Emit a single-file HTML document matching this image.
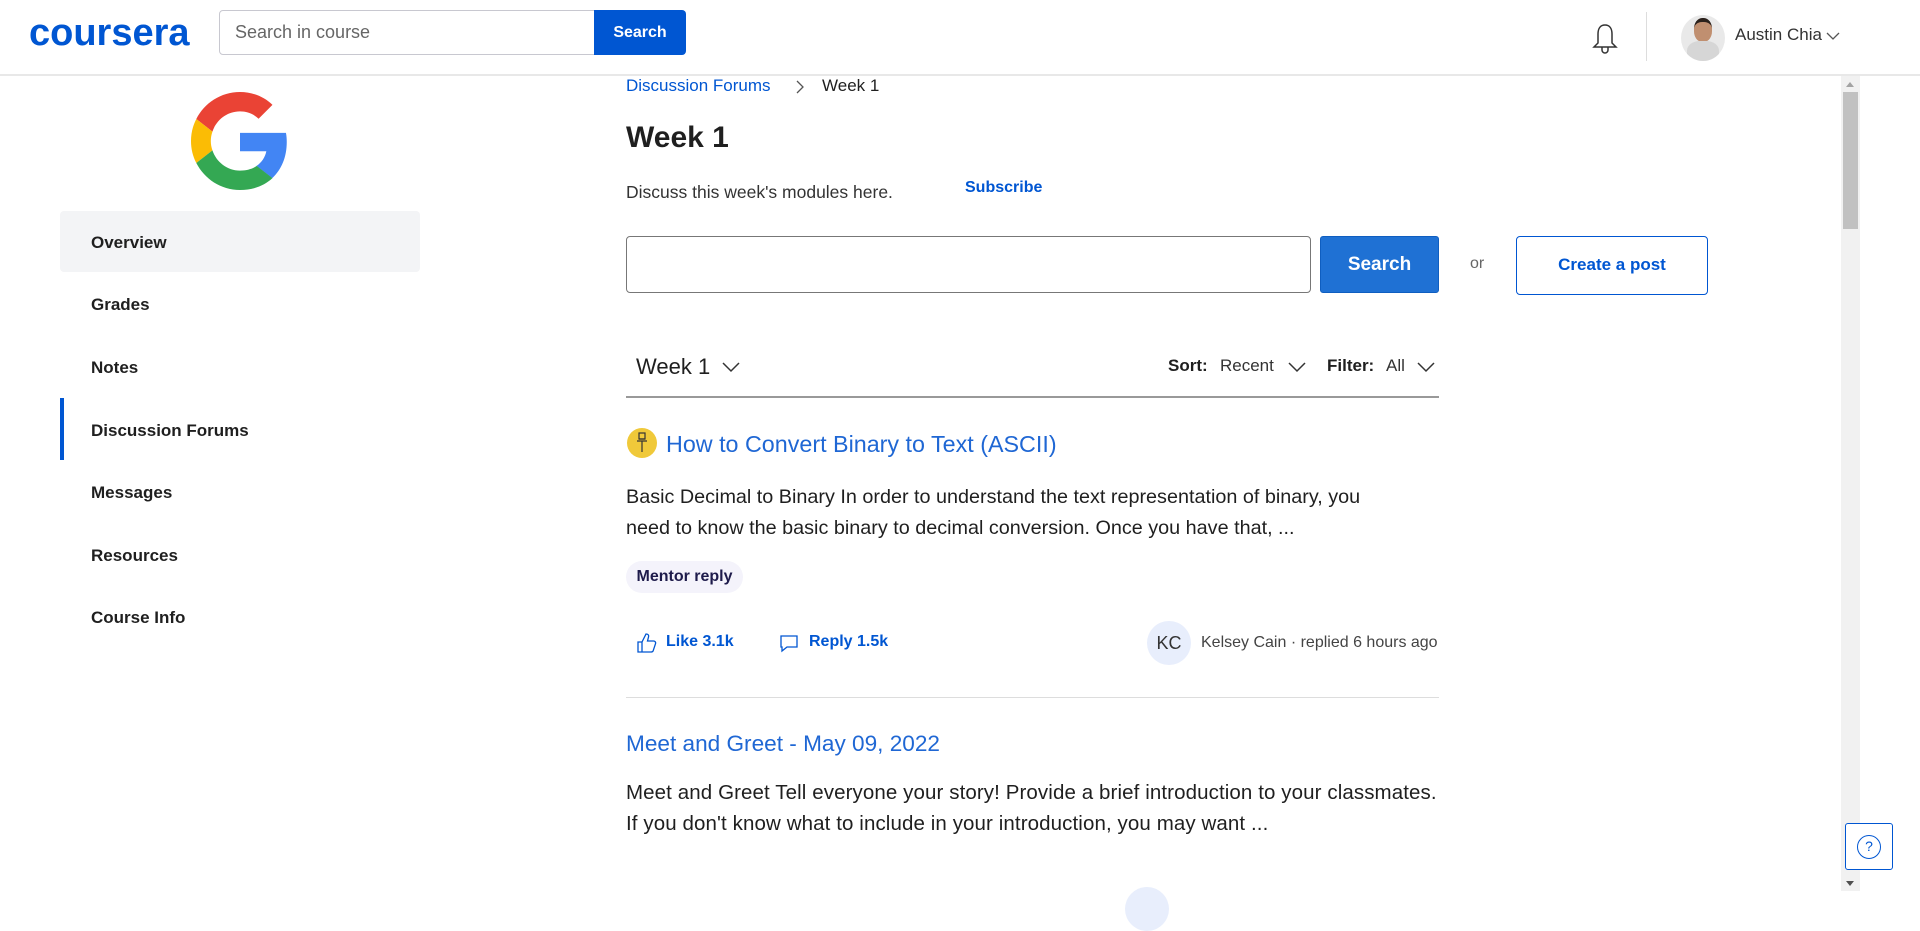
<!DOCTYPE html>
<html><head><meta charset="utf-8">
<style>
*{box-sizing:border-box;margin:0;padding:0}
body{width:1920px;height:891px;overflow:hidden;background:#fff;font-family:"Liberation Sans",Arial,sans-serif;color:#1f1f1f;position:relative}
.abs{position:absolute;white-space:nowrap}
.hdr{position:absolute;left:0;top:0;width:1920px;height:76px;border-bottom:2px solid #e8e8e8;background:#fff}
.blue{color:#0056d2}
.nav{position:absolute;left:91px;font-size:17px;font-weight:bold;color:#1f1f1f}
</style></head><body>
<div class="hdr">
  <div class="abs" style="left:29px;top:12px;font-size:38px;font-weight:bold;color:#0056d2;letter-spacing:0px">coursera</div>
  <div class="abs" style="left:219px;top:10px;width:376px;height:45px;border:1px solid #c8c8d0;border-radius:4px 0 0 4px;"></div>
  <div class="abs" style="left:235px;top:22px;font-size:18px;color:#666">Search in course</div>
  <div class="abs" style="left:594px;top:10px;width:92px;height:45px;background:#0056d2;border-radius:0 4px 4px 0;color:#fff;font-weight:bold;font-size:16px;text-align:center;line-height:45px">Search</div>
  <svg class="abs" style="left:1590px;top:22px" width="30" height="34" viewBox="0 0 30 34"><path d="M15 3c-5 0-7 4-7 9v9l-4 4h22l-4-4v-9c0-5-2-9-7-9z" fill="none" stroke="#333" stroke-width="1.5"/><path d="M12 25v3a3 3 0 0 0 6 0v-3" fill="none" stroke="#333" stroke-width="1.5"/></svg>
  <div class="abs" style="left:1646px;top:12px;width:1px;height:49px;background:#ddd"></div>
  <div class="abs" style="left:1681px;top:15px;width:44px;height:46px;border-radius:50%;background:#e9e9e9;overflow:hidden">
    <div style="position:absolute;left:13px;top:3px;width:18px;height:24px;border-radius:45%;background:#c08f70;border-top:4px solid #2b211c"></div>
    <div style="position:absolute;left:6px;top:26px;width:32px;height:24px;border-radius:40% 40% 0 0;background:#d6d6d6"></div>
  </div>
  <div class="abs" style="left:1735px;top:25px;font-size:17px;color:#333">Austin Chia</div>
  <svg class="abs" style="left:1826px;top:31px" width="14" height="10"><path d="M1 2l6 6 6-6" fill="none" stroke="#555" stroke-width="1.3"/></svg>
</div>
<div class="abs" style="left:1841px;top:76px;width:19px;height:815px;background:#f1f1f1"></div>
<div class="abs" style="left:1843px;top:92px;width:15px;height:137px;background:#c1c1c1"></div>
<svg class="abs" style="left:1844px;top:80px" width="12" height="8"><path d="M2 7l4-5 4 5z" fill="#a3a3a3"/></svg>
<svg class="abs" style="left:1844px;top:880px" width="12" height="8"><path d="M2 1l4 5 4-5z" fill="#505050"/></svg>
<div class="abs" style="left:1845px;top:823px;width:48px;height:47px;border:1.5px solid #0056d2;background:#fff;border-radius:3px"></div>
<div class="abs" style="left:1857px;top:835px;width:24px;height:24px;border:1.5px solid #0056d2;border-radius:50%;color:#0056d2;font-size:14px;text-align:center;line-height:21px">?</div>
<svg class="abs" style="left:191px;top:92px" width="98" height="98" viewBox="0 0 48 48">
<path fill="#EA4335" d="M24 9.5c3.5 0 6.6 1.2 9.1 3.6l6.8-6.8C35.9 2.4 30.4 0 24 0 14.6 0 6.6 5.4 2.6 13.2l7.9 6.2C12.4 13.7 17.7 9.5 24 9.5z"/>
<path fill="#4285F4" d="M46.9 24.5c0-1.6-.1-3.1-.4-4.5H24v9h12.9c-.6 3-2.3 5.5-4.8 7.2l7.7 6c4.5-4.2 7.1-10.3 7.1-17.7z"/>
<path fill="#FBBC05" d="M10.5 28.6c-.5-1.4-.8-3-.8-4.6s.3-3.2.8-4.6l-7.9-6.2C.9 16.5 0 20.1 0 24s.9 7.5 2.6 10.8l7.9-6.2z"/>
<path fill="#34A853" d="M24 48c6.5 0 11.9-2.1 15.9-5.8l-7.7-6c-2.2 1.5-5 2.3-8.2 2.3-6.3 0-11.6-4.2-13.5-9.9l-7.9 6.2C6.6 42.6 14.6 48 24 48z"/>
</svg>
<div class="abs" style="left:60px;top:211px;width:360px;height:61px;background:#f3f4f6;border-radius:4px"></div>
<div class="abs" style="left:60px;top:398px;width:4px;height:62px;background:#0056d2"></div>
<div class="nav" style="top:233px">Overview</div>
<div class="nav" style="top:295px">Grades</div>
<div class="nav" style="top:358px">Notes</div>
<div class="nav" style="top:421px">Discussion Forums</div>
<div class="nav" style="top:483px">Messages</div>
<div class="nav" style="top:546px">Resources</div>
<div class="nav" style="top:608px">Course Info</div>
<div class="abs blue" style="left:626px;top:76px;font-size:17px">Discussion Forums</div>
<svg class="abs" style="left:795px;top:80px" width="10" height="14"><path d="M2 1l6 6-6 6" fill="none" stroke="#555" stroke-width="1.3"/></svg>
<div class="abs" style="left:822px;top:76px;font-size:17px;color:#1f1f1f">Week 1</div>
<div class="abs" style="left:626px;top:121px;font-size:30px;font-weight:bold">Week 1</div>
<div class="abs" style="left:626px;top:182px;font-size:17.5px;color:#333">Discuss this week's modules here.</div>
<div class="abs blue" style="left:965px;top:179px;font-size:16px;font-weight:bold">Subscribe</div>
<div class="abs" style="left:626px;top:236px;width:685px;height:57px;border:1px solid #777;border-radius:4px"></div>
<div class="abs" style="left:1320px;top:236px;width:119px;height:57px;background:#1f71d4;border:1px solid #0f5ec0;border-radius:3px;color:#fff;font-weight:bold;font-size:19px;text-align:center;line-height:55px">Search</div>
<div class="abs" style="left:1470px;top:255px;font-size:16px;color:#666">or</div>
<div class="abs" style="left:1516px;top:236px;width:192px;height:59px;border:1.5px solid #0056d2;border-radius:4px;color:#0056d2;font-weight:bold;font-size:17px;text-align:center;line-height:56px">Create a post</div>
<div class="abs" style="left:636px;top:354px;font-size:22px;color:#1f1f1f">Week 1</div>
<svg class="abs" style="left:722px;top:361px" width="18" height="12"><path d="M1 2l8 8 8-8" fill="none" stroke="#333" stroke-width="1.5"/></svg>
<div class="abs" style="left:1168px;top:356px;font-size:17px;font-weight:bold">Sort:</div>
<div class="abs" style="left:1220px;top:356px;font-size:17px;color:#333">Recent</div>
<svg class="abs" style="left:1288px;top:361px" width="18" height="12"><path d="M1 2l8 8 8-8" fill="none" stroke="#333" stroke-width="1.5"/></svg>
<div class="abs" style="left:1327px;top:356px;font-size:17px;font-weight:bold">Filter:</div>
<div class="abs" style="left:1386px;top:356px;font-size:17px;color:#333">All</div>
<svg class="abs" style="left:1417px;top:361px" width="18" height="12"><path d="M1 2l8 8 8-8" fill="none" stroke="#333" stroke-width="1.5"/></svg>
<div class="abs" style="left:626px;top:396px;width:813px;height:2px;background:#999"></div>
<div class="abs" style="left:627px;top:428px;width:30px;height:30px;border-radius:50%;background:#f0c93a"></div>
<svg class="abs" style="left:634px;top:431px" width="16" height="24"><rect x="5" y="2" width="6" height="6" fill="none" stroke="#333" stroke-width="1.2"/><path d="M3 10h10M8 10v11M5 8h6" stroke="#333" stroke-width="1.2" fill="none"/></svg>
<div class="abs" style="left:666px;top:431px;font-size:23.3px;color:#1f67d4">How to Convert Binary to Text (ASCII)</div>
<div class="abs" style="left:626px;top:482px;font-size:19.8px;color:#1f1f1f;line-height:31px">Basic Decimal to Binary In order to understand the text representation of binary, you<br>need to know the basic binary to decimal conversion. Once you have that, ...</div>
<div class="abs" style="left:626px;top:561px;width:117px;height:32px;border-radius:16px;background:#f4f3fb;color:#1e1b4b;font-weight:bold;font-size:16px;text-align:center;line-height:32px">Mentor reply</div>
<svg class="abs" style="left:635px;top:631px" width="22" height="24" viewBox="0 0 22 24"><path d="M3 11h4v10H3zM7 11l4-8c2 0 3 1 2.5 3l-1 4h6c1.5 0 2.5 1.3 2 2.7l-2.3 7c-.4 1-1.2 1.3-2.2 1.3H7" fill="none" stroke="#0056d2" stroke-width="1.3"/></svg>
<div class="abs blue" style="left:666px;top:633px;font-size:16px;font-weight:bold">Like 3.1k</div>
<svg class="abs" style="left:779px;top:634px" width="20" height="20" viewBox="0 0 20 20"><path d="M2 2h16v11H8l-5 4v-4H2z" fill="none" stroke="#0056d2" stroke-width="1.3"/></svg>
<div class="abs blue" style="left:809px;top:633px;font-size:16px;font-weight:bold">Reply 1.5k</div>
<div class="abs" style="left:1147px;top:621px;width:44px;height:44px;border-radius:50%;background:#e8eefc;color:#333;font-size:18px;text-align:center;line-height:44px">KC</div>
<div class="abs" style="left:1201px;top:634px;font-size:16px;color:#444">Kelsey Cain · replied 6 hours ago</div>
<div class="abs" style="left:626px;top:697px;width:813px;height:1px;background:#ddd"></div>
<div class="abs" style="left:626px;top:731px;font-size:22.6px;color:#1f67d4">Meet and Greet - May 09, 2022</div>
<div class="abs" style="left:626px;top:777px;font-size:20.5px;color:#1f1f1f;line-height:31px;letter-spacing:0.1px">Meet and Greet Tell everyone your story! Provide a brief introduction to your classmates.<br>If you don't know what to include in your introduction, you may want ...</div>
<div class="abs" style="left:1125px;top:887px;width:44px;height:44px;border-radius:50%;background:#e8eefc"></div>
</body></html>
